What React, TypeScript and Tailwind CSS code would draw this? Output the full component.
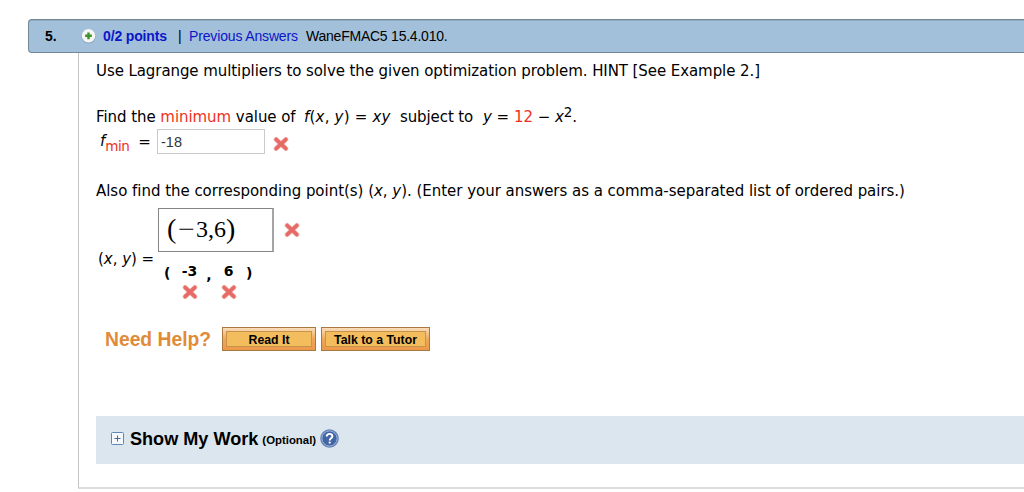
import type { ReactNode } from "react";

export default function App() {
  return (
    <main className="h-[492px] w-[1024px] overflow-hidden bg-white pt-[19px] pl-7 font-['DejaVu_Sans',sans-serif] text-[15px] leading-5 tracking-[-0.03px] text-black">
      <QuestionHeader />
      <section className="ml-[50px] h-[436px] border-b-2 border-l border-b-[#dcdcdc] border-l-[#c4c4c4] pl-[17px]">
        <p className="pt-2 tracking-[-0.08px] whitespace-nowrap">
          Use Lagrange multipliers to solve the given optimization problem. HINT
          [See Example 2.]
        </p>
        <p className="mt-[26px] flex h-5 whitespace-pre">
          <span className="w-[208px] tracking-[-0.06px]">
            Find the <Red>minimum</Red> value of
          </span>
          <span className="w-[96px] tracking-[0.2px]">
            <i>f</i>(<Var>x</Var>, <Var>y</Var>) = <Var>xy</Var>
          </span>
          <span className="w-[83px] tracking-[-0.1px]">subject to</span>
          <span>
            <Var>y</Var> = <Red>12</Red> − <Var>x</Var>
            <sup className="top-[-5px] text-[13.5px]">2</sup>.
          </span>
        </p>
        <div className="mt-[2px] flex h-[25px] tracking-normal whitespace-pre">
          <div className="flex w-[61px] pl-1">
            <i className="text-[15px] leading-6">f</i>
            <span className="pt-[7px] text-[13.5px] tracking-[-0.5px] text-[#ee3124]">
              min
            </span>
            <span className="pt-[3px] pl-[9px]">=</span>
          </div>
          <div className="w-[108px] border border-[#c8cbcb] pl-[3px] font-['Liberation_Sans',sans-serif] text-[14.5px] leading-[25px] text-[#333]">
            -18
          </div>
          <Cross className="mt-[7px] ml-2" />
        </div>
        <p className="mt-[27px] tracking-[-0.03px] whitespace-nowrap">
          Also find the corresponding point(s) (<Var>x</Var>, <Var>y</Var>).
          (Enter your answers as a comma-separated list of ordered pairs.)
        </p>
        <div className="mt-[7px] flex h-[94px]">
          <div className="w-[62px] pt-[41px] pl-[2px] whitespace-nowrap">
            (<Var>x</Var>, <Var>y</Var>) =
          </div>
          <div>
            <div className="flex">
              <div className="flex h-11 w-[116px] border border-r-2 border-[#858585] border-r-[#a5a5a5] pl-[8px] font-['Liberation_Serif',serif] text-[24px] leading-[41px] tracking-normal whitespace-nowrap">
                <span className="w-[10px] text-[28px] leading-[39px]">(</span>
                <span className="w-[19px] scale-x-125 text-center">−</span>
                <span>3,6</span>
                <span className="text-[28px] leading-[39px]">)</span>
              </div>
              <Cross className="mt-[14px] ml-[10px]" />
            </div>
            <div className="flex pt-[9px] pl-[6px] text-[14px] font-bold tracking-normal">
              <span className="w-[16px] pt-[2px]">(</span>
              <Answer value="-3" />
              <span className="w-[20px] pt-1 text-center">,</span>
              <Answer value="6" />
              <span className="pt-[2px] pl-[8px]">)</span>
            </div>
          </div>
        </div>
        <div className="mt-[25px] flex h-[25px] font-['Liberation_Sans',sans-serif] font-bold tracking-normal">
          <span className="w-[126px] pl-[9px] text-[19.3px] leading-[25px] text-[#df8b38]">
            Need Help?
          </span>
          <HelpButton className="w-[94px]" label="Read It" />
          <HelpButton className="ml-[5px] w-[109px]" label="Talk to a Tutor" />
        </div>
        <div className="mt-16 flex h-12 items-center bg-[#dce6ee] pb-[3px] pl-[15px] font-['Liberation_Sans',sans-serif] font-bold tracking-normal">
          <ExpandIcon />
          <span className="ml-[6px] text-[18.1px]">Show My Work</span>
          <span className="mt-[2px] ml-[4px] text-[11.4px]">(Optional)</span>
          <HelpIcon />
        </div>
      </section>
    </main>
  );
}

function QuestionHeader() {
  return (
    <header className="flex h-[34px] items-center rounded-l-[4px] border border-r-0 border-[#738797] bg-[#a3c0da] pl-4 font-['Liberation_Sans',sans-serif] text-[14px] tracking-[-0.15px] whitespace-nowrap shadow-[inset_0_1px_0_#91aac0]">
      <b className="w-9">5.</b>
      <svg width="15" height="16" viewBox="0 0 16 16">
        <circle cx="8" cy="8.5" r="7.5" fill="#8ba7bf" />
        <circle cx="8" cy="7.8" r="7.2" fill="#f5f6f5" />
        <path d="M8 4.2v7.2M4.4 7.8h7.2" stroke="#3c9428" strokeWidth="2.6" />
      </svg>
      <b className="ml-[7px] w-[75px] text-[#0b16c9]">0/2 points</b>
      <span className="w-[11px]">|</span>
      <span className="w-[117px] text-[#0b16c9]">Previous Answers</span>
      <span className="tracking-[-0.23px]">WaneFMAC5 15.4.010.</span>
    </header>
  );
}

function Red({ children }: { children: ReactNode }) {
  return <span className="text-[#ee3124]">{children}</span>;
}

function Var({ children }: { children: ReactNode }) {
  return <i>{children}</i>;
}

function Answer({ value }: { value: string }) {
  return (
    <div className="flex w-[19px] flex-col items-center">
      <span>{value}</span>
      <Cross className="mt-[3px]" />
    </div>
  );
}

function Cross({ className }: { className: string }) {
  return (
    <svg
      className={`shrink-0 ${className}`}
      width="16"
      height="16"
      viewBox="0 0 16 16"
    >
      <path
        d="M3.2 3.5 12.8 12.5M12.8 3.5 3.2 12.5"
        stroke="#f3b5b0"
        strokeWidth="5"
        strokeLinecap="round"
      />
      <path
        d="M3.2 3.5 12.8 12.5M12.8 3.5 3.2 12.5"
        stroke="#e66a66"
        strokeWidth="3.6"
        strokeLinecap="round"
      />
    </svg>
  );
}

function HelpButton({ label, className }: { label: string; className: string }) {
  return (
    <button
      className={`h-6 border border-[#a8793f] bg-linear-to-b from-[#f8ddbb] via-[#efa858] to-[#ec984a] p-[3px] text-[12.3px] leading-4 ${className}`}
    >
      <span className="block h-4 border border-[#c8934a] bg-[#f3bd5d] leading-[17px] whitespace-nowrap">
        {label}
      </span>
    </button>
  );
}

function ExpandIcon() {
  return (
    <svg width="13" height="13" viewBox="0 0 13 13">
      <rect
        x=".5"
        y=".5"
        width="12"
        height="12"
        rx="1"
        fill="#f5f9fd"
        stroke="#5f86b8"
      />
      <path d="M6.5 3.5v6M3.5 6.5h6" stroke="#44699d" />
    </svg>
  );
}

function HelpIcon() {
  return (
    <svg className="ml-[4px]" width="19" height="19" viewBox="0 0 19 19">
      <circle cx="9.5" cy="9.5" r="9.3" fill="#5f7fb4" />
      <circle
        cx="9.5"
        cy="9.5"
        r="7.6"
        fill="#4265a6"
        stroke="#a5bbdc"
        strokeWidth=".9"
      />
      <path
        d="M6.7 7.5c0-3.6 5.7-3.4 5.7-.2 0 2-2.7 2-2.7 4.1"
        fill="none"
        stroke="#fff"
        strokeWidth="1.9"
      />
      <circle cx="9.7" cy="13.6" r="1.15" fill="#fff" />
    </svg>
  );
}
